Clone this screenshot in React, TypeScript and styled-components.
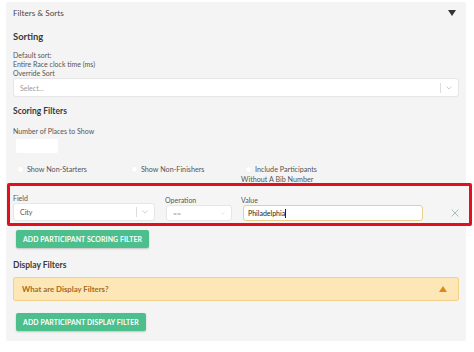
import React from 'react';
import styled, { createGlobalStyle } from 'styled-components';

const GlobalStyle = createGlobalStyle`
  html, body { margin: 0; padding: 0; background: #fff; }
  body { font-family: Lato, "Open Sans", sans-serif; color: #555; }
  * { box-sizing: border-box; }
`;

const Page = styled.div`
  width: 474px;
  height: 352px;
  overflow: hidden;
  padding: 2px 8px 0 6px;
`;

const Panel = styled.section`
  background: #f4f4f4;
  border-radius: 2px;
  padding: 0 7px 10px 7px;
`;

const Header = styled.div`
  height: 22px;
  display: flex;
  align-items: center;
  justify-content: space-between;
  font-size: 8.2px;
  color: #4a4a4a;
`;

const Caret = styled.span<{ $up?: boolean; $color: string }>`
  width: 0;
  height: 0;
  margin-right: ${(p) => (p.$up ? '11px' : '3px')};
  border-left: 4.5px solid transparent;
  border-right: 4.5px solid transparent;
  ${(p) =>
    p.$up
      ? `border-bottom: 6px solid ${p.$color};`
      : `border-top: 6px solid ${p.$color};`}
`;

const Heading = styled.h3<{ $size: number; $top: number }>`
  margin: ${(p) => p.$top}px 0 0 0;
  font-size: ${(p) => p.$size}px;
  line-height: 12px;
  font-weight: 700;
  color: #3a3a3a;
`;

const Small = styled.div<{ $top?: number }>`
  margin-top: ${(p) => p.$top ?? 0}px;
  font-size: 7px;
  line-height: 9px;
  color: #555;
`;

const SelectBox = styled.div<{ $h: number; $top?: number }>`
  margin-top: ${(p) => p.$top ?? 0}px;
  width: 100%;
  height: ${(p) => p.$h}px;
  background: #fff;
  border: 1px solid #e6e6e6;
  border-radius: 3px;
  display: flex;
  align-items: center;
  padding-left: 6px;
  font-size: 7px;
  color: #444;
`;

const Placeholder = styled.span<{ $dark?: boolean }>`
  flex: 1;
  color: ${(p) => (p.$dark ? '#555' : '#9a9a9a')};
`;

const Indicator = styled.span`
  display: flex;
  align-items: center;
  gap: 5px;
  padding-right: 6px;
  height: 100%;
`;

const Separator = styled.span`
  width: 1px;
  height: 10px;
  background: #dcdcdc;
`;

const Chevron = ({ size = 6, color = '#bdbdbd' }: { size?: number; color?: string }) => (
  <svg width={size} height={size * 0.6} viewBox="0 0 10 6">
    <path d="M1 1 L5 5 L9 1" fill="none" stroke={color} strokeWidth="1.2" />
  </svg>
);

const NumberInput = styled.div`
  margin: 3px 0 0 3px;
  width: 42px;
  height: 14px;
  background: #fff;
  border-radius: 2px;
`;

const CheckGrid = styled.div`
  margin-top: 12px;
  display: grid;
  grid-template-columns: 114px 114px 114px;
  font-size: 7.2px;
  line-height: 9.5px;
  color: #555;
`;

const CheckLabel = styled.div<{ $w?: number }>`
  max-width: ${(p) => p.$w ?? 114}px;
`;

const Radio = styled.span`
  display: inline-block;
  width: 7px;
  height: 7px;
  margin: 0 3px -1px 4px;
  border-radius: 50%;
  background: #fff;
  border: 1px solid #f0f0f0;
`;

const FilterRow = styled.div`
  position: relative;
  margin: -1px -13px 0 -6px;
  padding: 11px 13px 5px 6px;
  display: flex;
  align-items: flex-end;
  background: #f5f5f5;

  &::after {
    content: '';
    position: absolute;
    inset: 0;
    border: 3px solid #e0101c;
    border-radius: 2px;
    pointer-events: none;
  }
`;

const Field = styled.div<{ $w: number; $gap: number }>`
  width: ${(p) => p.$w}px;
  margin-right: ${(p) => p.$gap}px;
  display: flex;
  flex-direction: column;
`;

const FieldLabel = styled.label<{ $indent?: number }>`
  font-size: 7px;
  line-height: 9px;
  color: #555;
  margin-left: ${(p) => -(p.$indent ?? 0)}px;
`;

const ValueInput = styled.div`
  height: 16px;
  background: #fff;
  border: 1px solid #ead08f;
  border-radius: 3px;
  display: flex;
  align-items: center;
  padding-left: 4px;
  font-size: 7px;
  color: #222;
`;

const Cursor = styled.span`
  display: inline-block;
  width: 1px;
  height: 9px;
  background: #222;
`;

const Clear = styled.span`
  margin-left: auto;
  margin-bottom: 4px;
  display: flex;
`;

const GreenButton = styled.button<{ $w: number; $top: number }>`
  display: block;
  margin: ${(p) => p.$top}px 0 0 3px;
  width: ${(p) => p.$w}px;
  height: 18px;
  border: none;
  border-radius: 2px;
  background: #4cbf8d;
  color: #fff;
  font-family: Lato, "Open Sans", sans-serif;
  font-weight: 700;
  font-size: 6.9px;
  letter-spacing: 0.1px;
  padding: 0;
  box-shadow: 0 1px 2px rgba(0, 0, 0, 0.2);
`;

const Notice = styled.div`
  margin-top: 6px;
  height: 24px;
  background: #fde7b7;
  border: 1px solid #f4d08b;
  border-radius: 2px;
  display: flex;
  align-items: center;
  justify-content: space-between;
  padding-left: 8px;
  font-size: 7.8px;
  font-weight: 700;
  color: #a36b1f;
`;

export default function App() {
  return (
    <>
      <GlobalStyle />
      <Page>
        <Panel>
          <Header>
            <span>Filters &amp; Sorts</span>
            <Caret $color="#333" />
          </Header>

          <Heading $size={9.4} $top={7}>Sorting</Heading>
          <Small $top={8}>Default sort:</Small>
          <Small>Entire Race clock time (ms)</Small>
          <Small>Override Sort</Small>
          <SelectBox $h={19}>
            <Placeholder>Select...</Placeholder>
            <Indicator>
              <Separator />
              <Chevron />
            </Indicator>
          </SelectBox>

          <Heading $size={8.5} $top={8}>Scoring Filters</Heading>
          <Small $top={10}>Number of Places to Show</Small>
          <NumberInput />

          <CheckGrid>
            <CheckLabel>
              <Radio />Show Non-Starters
            </CheckLabel>
            <CheckLabel>
              <Radio />Show Non-Finishers
            </CheckLabel>
            <CheckLabel $w={82}>
              <Radio />Include Participants Without A Bib Number
            </CheckLabel>
          </CheckGrid>

          <FilterRow>
            <Field $w={142} $gap={11}>
              <FieldLabel>Field</FieldLabel>
              <SelectBox $h={18}>
                <Placeholder $dark>City</Placeholder>
                <Indicator>
                  <Separator />
                  <Chevron />
                </Indicator>
              </SelectBox>
            </Field>
            <Field $w={66} $gap={11}>
              <FieldLabel $indent={1}>Operation</FieldLabel>
              <SelectBox $h={16}>
                <Placeholder>==</Placeholder>
                <Indicator>
                  <Chevron size={4} color="#ccc" />
                </Indicator>
              </SelectBox>
            </Field>
            <Field $w={180} $gap={0}>
              <FieldLabel $indent={2}>Value</FieldLabel>
              <ValueInput>
                Philadelphia
                <Cursor />
              </ValueInput>
            </Field>
            <Clear>
              <svg width="8" height="8" viewBox="0 0 8 8">
                <path d="M0.5 0.5 L7.5 7.5 M7.5 0.5 L0.5 7.5" stroke="#8db7a4" strokeWidth="0.8" />
              </svg>
            </Clear>
          </FilterRow>

          <GreenButton $w={133} $top={4}>ADD PARTICIPANT SCORING FILTER</GreenButton>

          <Heading $size={8.5} $top={11}>Display Filters</Heading>
          <Notice>
            <span>What are Display Filters?</span>
            <Caret $up $color="#d88c16" />
          </Notice>

          <GreenButton $w={130} $top={12}>ADD PARTICIPANT DISPLAY FILTER</GreenButton>
        </Panel>
      </Page>
    </>
  );
}
